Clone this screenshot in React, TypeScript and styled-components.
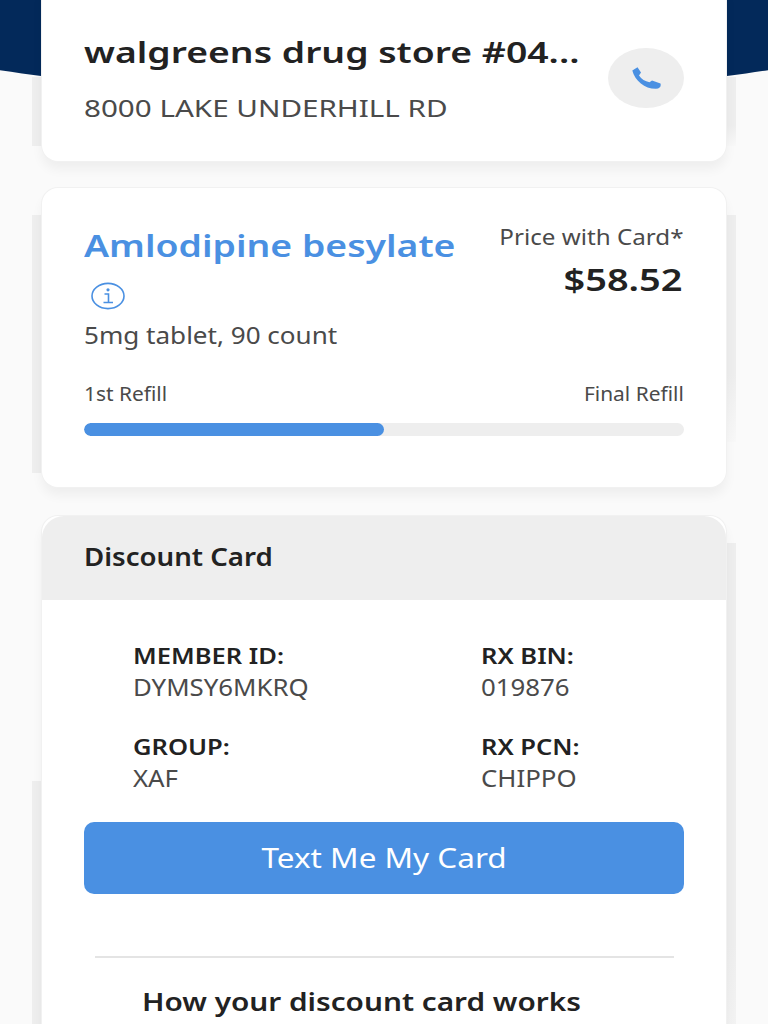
import styled, { createGlobalStyle } from "styled-components";

const GlobalStyle = createGlobalStyle`
  html, body {
    margin: 0;
    padding: 0;
    background: #fafafa;
    font-family: "Noto Sans", "Open Sans", sans-serif;
  }
`;

const Page = styled.div`
  position: relative;
  isolation: isolate;
  height: 1024px;
  overflow: hidden;
  background: #fafafa;
`;

// navy curved band behind the first card
const Band = styled.div`
  position: absolute;
  top: -103px;
  left: -384px;
  width: 1536px;
  height: 200px;
  background: #03295a;
  border-radius: 0 0 768px 768px / 0 0 200px 200px;
`;

const Content = styled.div`
  position: relative;
  display: flex;
  flex-direction: column;
  gap: 27px;
  padding: 0 42px;
`;

const Card = styled.section<{ $leftTop: number; $leftBottom: number; $rightTop: number; $rightBottom: number }>`
  position: relative;
  background: #fff;
  border-radius: 16px;
  box-shadow: 0 0 0 1px #f1f1f1, 0 8px 12px rgba(0, 0, 0, 0.05);

  &::before,
  &::after {
    content: "";
    position: absolute;
    z-index: -1;
    width: 10px;
    background: #eeeeee;
  }
  &::before {
    left: -10px;
    top: ${(p) => p.$leftTop}px;
    bottom: ${(p) => p.$leftBottom}px;
  }
  &::after {
    right: -10px;
    top: ${(p) => p.$rightTop}px;
    bottom: ${(p) => p.$rightBottom}px;
    background: linear-gradient(#eeeeee 70%, #f8f8f8);
  }
`;

const StoreCard = styled(Card)`
  height: 181px;
  margin-top: -20px;
  display: flex;
  align-items: flex-start;
  justify-content: space-between;
  padding: 0 42px;
  box-sizing: border-box;
`;

const StoreInfo = styled.div`
  padding-top: 51px;
`;

const StoreName = styled.h1`
  margin: 0;
  font-size: 29px;
  line-height: 42px;
  font-weight: 600;
  color: #222;
  white-space: nowrap;
  transform: scaleX(1.287);
  transform-origin: left center;
`;

const StoreAddress = styled.p`
  margin: 18px 0 0;
  font-size: 24px;
  line-height: 34px;
  font-weight: 400;
  color: #4a4a4a;
  white-space: nowrap;
  transform: scaleX(1.233);
  transform-origin: left center;
`;

const CallButton = styled.button`
  display: flex;
  flex: none;
  align-items: center;
  justify-content: center;
  width: 76px;
  height: 60px;
  margin-top: 68px;
  padding: 0;
  border: none;
  border-radius: 50%;
  background: #eeeeee;
`;

const DrugCard = styled(Card)`
  box-sizing: border-box;
  height: 299px;
  padding: 34px 42px 0;
`;

const DrugTop = styled.div`
  display: flex;
  justify-content: space-between;
  align-items: flex-start;
`;

const DrugName = styled.h2`
  margin: 0;
  width: 385px;
  font-size: 31px;
  line-height: 46px;
  font-weight: 600;
  color: #4a90e2;
  white-space: nowrap;
  transform: scaleX(1.205);
  transform-origin: left center;
`;

const InfoIcon = styled.svg`
  display: block;
  margin: 14px 0 0 7px;
`;

const Dose = styled.p`
  margin: 8px 0 0;
  font-size: 24px;
  line-height: 34px;
  color: #4a4a4a;
  white-space: nowrap;
  transform: scaleX(1.086);
  transform-origin: left center;
`;

const PriceBox = styled.div`
  text-align: right;
`;

const PriceLabel = styled.div`
  margin-top: -1px;
  font-size: 22px;
  line-height: 30px;
  color: #4a4a4a;
  transform: scaleX(1.1);
  transform-origin: right center;
`;

const PriceValue = styled.div`
  margin: 7px 1px 0 0;
  font-size: 30px;
  line-height: 44px;
  font-weight: 600;
  color: #222;
  transform: scaleX(1.265);
  transform-origin: right center;
`;

const RefillLabels = styled.div`
  display: flex;
  justify-content: space-between;
  margin-top: 28px;
  font-size: 19px;
  line-height: 28px;
  color: #4a4a4a;
`;

const RefillLabel = styled.span<{ $end?: boolean }>`
  transform: scaleX(1.1);
  transform-origin: ${(p) => (p.$end ? "right" : "left")} center;
`;

const Track = styled.div`
  height: 13px;
  margin-top: 15px;
  border-radius: 7px;
  background: #eeeeee;
  overflow: hidden;
`;

const Fill = styled.div`
  height: 100%;
  border-radius: 7px;
  background: #4a90e2;
`;

const DiscountCard = styled(Card)`
  height: 600px;
  margin-top: 2px;
`;

const DiscountHeader = styled.div`
  box-sizing: border-box;
  height: 84px;
  padding: 21px 42px 0;
  border-radius: 22px 22px 0 0;
  background: #eeeeee;
`;

const DiscountTitle = styled.h2`
  margin: 0;
  font-size: 25px;
  line-height: 38px;
  font-weight: 600;
  color: #222;
  transform: scaleX(1.105);
  transform-origin: left center;
`;

const Fields = styled.div`
  display: grid;
  grid-template-columns: 348px 1fr;
  row-gap: 28px;
  padding: 39px 0 0 91px;
`;

const Label = styled.div`
  font-size: 22px;
  line-height: 32px;
  font-weight: 600;
  color: #222;
  transform: scaleX(1.16);
  transform-origin: left center;
`;

const Value = styled.div`
  font-size: 24px;
  line-height: 31px;
  color: #4a4a4a;
  transform: scaleX(1.075);
  transform-origin: left center;
`;

const TextButton = styled.button`
  display: block;
  box-sizing: border-box;
  width: 600px;
  height: 72px;
  margin: 29px 42px 0;
  padding: 0 0 2px;
  border: none;
  border-radius: 10px;
  background: #4a90e2;
  color: #fff;
  font-family: inherit;
  font-size: 28px;
`;

const ButtonText = styled.span`
  display: inline-block;
  transform: scaleX(1.124);
`;

const Divider = styled.hr`
  margin: 62px 52px 0 53px;
  border: none;
  border-top: 2px solid #e4e4e4;
`;

const HowHeading = styled.h3`
  margin: 23px 0 0 100px;
  font-size: 25px;
  line-height: 40px;
  font-weight: 600;
  color: #222;
  white-space: nowrap;
  transform: scaleX(1.19);
  transform-origin: left center;
`;

const fields = [
  { label: "MEMBER ID:", value: "DYMSY6MKRQ" },
  { label: "RX BIN:", value: "019876" },
  { label: "GROUP:", value: "XAF" },
  { label: "RX PCN:", value: "CHIPPO" },
];

const App = () => {
  return (
    <Page>
      <GlobalStyle />
      <Band />
      <Content>
        <StoreCard $leftTop={97} $leftBottom={15} $rightTop={97} $rightBottom={15}>
          <StoreInfo>
            <StoreName>walgreens drug store #04...</StoreName>
            <StoreAddress>8000 LAKE UNDERHILL RD</StoreAddress>
          </StoreInfo>
          <CallButton aria-label="Call">
            <svg width="29" height="22" viewBox="0 0 29 22">
              <path
                d="M0.3 3.5 L5.5 0.2 L9 5.5 L7 8.5 C9.5 12 13 14.5 17.5 15.2 L20 13.5 L28.5 16.5 C29.3 19 28 21.5 24 21.8 C13 22 3 14 0.3 3.5 Z"
                fill="#4a90e2"
              />
            </svg>
          </CallButton>
        </StoreCard>

        <DrugCard $leftTop={27} $leftBottom={14} $rightTop={27} $rightBottom={45}>
          <DrugTop>
            <div>
              <DrugName>Amlodipine besylate</DrugName>
              <InfoIcon width="34" height="28" viewBox="0 0 34 28">
                <ellipse cx="17" cy="14" rx="16" ry="12.6" fill="none" stroke="#4a90e2" strokeWidth="1.6" />
                <circle cx="17" cy="7.8" r="1.6" fill="#4a90e2" />
                <path d="M13.5 12 H17.5 V20.5 M12.5 20.5 H22" fill="none" stroke="#4a90e2" strokeWidth="1.6" />
              </InfoIcon>
              <Dose>5mg tablet, 90 count</Dose>
            </div>
            <PriceBox>
              <PriceLabel>Price with Card*</PriceLabel>
              <PriceValue>$58.52</PriceValue>
            </PriceBox>
          </DrugTop>
          <RefillLabels>
            <RefillLabel>1st Refill</RefillLabel>
            <RefillLabel $end>Final Refill</RefillLabel>
          </RefillLabels>
          <Track>
            <Fill style={{ width: "50%" }} />
          </Track>
        </DrugCard>

        <DiscountCard $leftTop={265} $leftBottom={0} $rightTop={27} $rightBottom={0}>
          <DiscountHeader>
            <DiscountTitle>Discount Card</DiscountTitle>
          </DiscountHeader>
          <Fields>
            {fields.map((f) => (
              <div key={f.label}>
                <Label>{f.label}</Label>
                <Value>{f.value}</Value>
              </div>
            ))}
          </Fields>
          <TextButton>
            <ButtonText>Text Me My Card</ButtonText>
          </TextButton>
          <Divider />
          <HowHeading>How your discount card works</HowHeading>
        </DiscountCard>
      </Content>
    </Page>
  );
};

export default App;
